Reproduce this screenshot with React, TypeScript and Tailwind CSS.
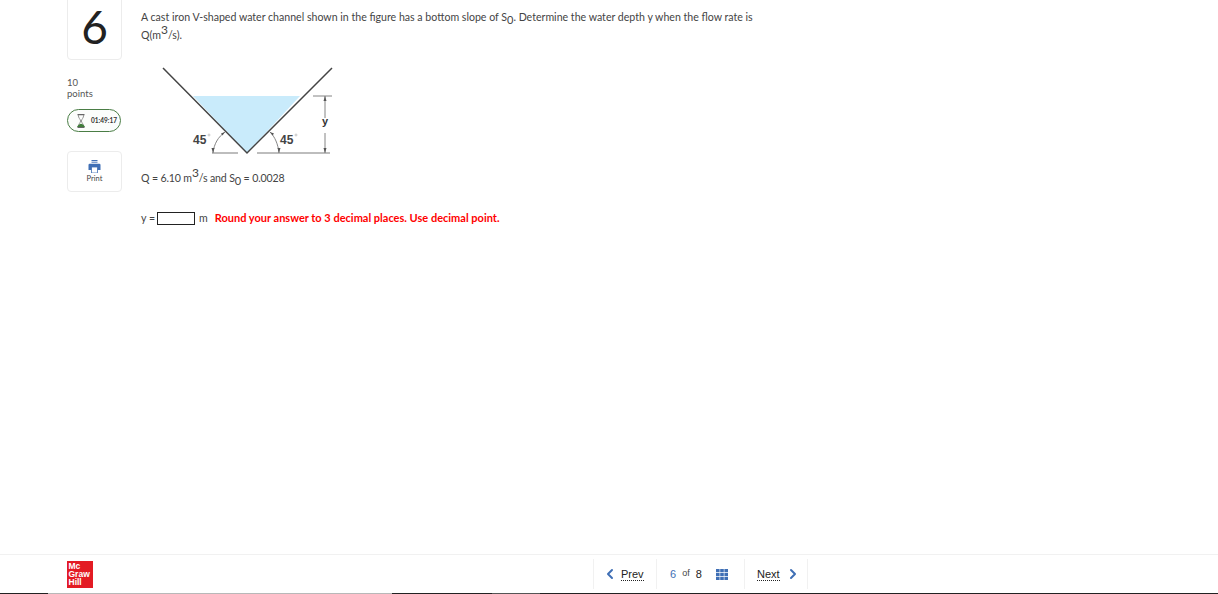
import { ChevronLeft, ChevronRight } from "lucide-react";

// Print glyph from the sidebar button
function PrintIcon() {
  return (
    <svg width="13" height="13" viewBox="0 0 13 13">
      <rect x="3.500" y="0" width="6" height="1.200" fill="#3f6fb5" />
      <rect x="3.500" y="1.800" width="6" height="1.200" fill="#7f9fd0" />
      <path d="M.5 5 a1.200 1.200 0 0 1 1.200-1.200 h9.600 a1.200 1.200 0 0 1 1.200 1.200 v5 h-12z" fill="#3f6fb5" />
      <rect x="3.500" y="7" width="6" height="6" fill="#fff" stroke="#3f6fb5" strokeWidth="0.8" />
    </svg>
  );
}

function HourglassIcon() {
  return (
    <svg width="10" height="14" viewBox="0 0 10 14" fill="none">
      <path d="M1.500 .7h7M1.500 13.300h7" stroke="#666" strokeWidth="1.200" />
      <path d="M2.300 1c0 3.200 2.300 4.300 2.300 6s-2.300 2.800-2.300 6M7.700 1c0 3.200-2.300 4.300-2.300 6s2.300 2.800 2.300 6" stroke="#888" strokeWidth="0.9" />
      <path d="M1 13c.8-2 2.800-3 4-3.300 1.200.3 3.200 1.300 4 3.300z" fill="#3f7d3a" />
    </svg>
  );
}

// Channel figure: V section, water fill, angle arcs and depth dimension
function ChannelFigure() {
  return (
    <svg width="175" height="92" viewBox="0 0 175 92" fill="none">
      <path d="M33 31 H140 L87 88z" fill="#c9ebfb" />
      <path d="M3 3 L87 88 L172 3" stroke="#444" strokeWidth="1.500" />
      <path d="M52 88 H78 M97 88 H170" stroke="#a8a8a8" strokeWidth="1.400" />
      <path d="M153 31 H172 M165 31 V53 M165 68 V88" stroke="#777" strokeWidth="0.900" />
      <path d="M165 31 l-1.500 5 h3z M165 88 l-1.500-5 h3z" fill="#555" />
      <path d="M53 88 C54 79 58 72 65 67" stroke="#777" strokeWidth="0.900" />
      <path d="M110 67 C115 72 118 79 119 88" stroke="#777" strokeWidth="0.900" />
      <path d="M53 88 l-1.500-5 h3z M119 88 l-1.500-5 h3z" fill="#555" />
      <path d="M65 67 l-4 1.500 1.500 2z M110 67 l4 1.500 -1.500 2z" fill="#555" />
      <text x="165" y="60" textAnchor="middle" fontSize="11" fontWeight="700" fill="#333" fontFamily="Liberation Sans, sans-serif">y</text>
      <text x="33" y="79" fontSize="12" fontWeight="700" fill="#444" fontFamily="Liberation Sans, sans-serif">45</text>
      <text x="120" y="79" fontSize="12" fontWeight="700" fill="#444" fontFamily="Liberation Sans, sans-serif">45</text>
      <circle cx="49" cy="70" r="1" stroke="#aaa" strokeWidth="0.600" />
      <circle cx="136" cy="70" r="1" stroke="#aaa" strokeWidth="0.600" />
    </svg>
  );
}

export default function App() {
  return (
    <div className="relative h-[594px] w-[1218px] overflow-hidden bg-white font-['Lato','Liberation_Sans',sans-serif] text-[#444]">
      <div className="flex h-[554px]">
        {/* Left rail */}
        <aside className="ml-[67px] flex w-[74px] shrink-0 flex-col items-start">
          <div className="-mt-[4px] flex h-[64px] w-[55px] items-center justify-center rounded border border-[#ececec] pb-[3px] text-[46px] leading-none text-[#222]">
            6
          </div>
          <div className="mt-[17px] text-[9.500px] leading-[11px] text-[#555]">
            10
            <br />
            points
          </div>
          <div className="mt-[10px] flex h-[23px] w-[54px] items-center gap-[5px] rounded-[12px] border border-[#4a7d45] bg-[#fbfdfb] pl-[8px]">
            <HourglassIcon />
            <span className="text-[6.500px] font-bold text-[#333]">01:49:17</span>
          </div>
          <div className="mt-[19px] flex h-[41px] w-[55px] flex-col items-center justify-center rounded border border-[#ececec]">
            <PrintIcon />
            <span className="mt-[2px] text-[7.500px] leading-[8px] text-[#444]">Print</span>
          </div>
        </aside>

        {/* Question */}
        <main className="flex-1 text-[10.600px]">
          <p className="w-[625px] pt-[8px] leading-[18px]">
            A cast iron V-shaped water channel shown in the figure has a bottom slope of S
            <sub className="text-[11px] leading-none">0</sub>. Determine the water depth y when the flow rate is Q(m
            <sup className="top-[-5px] text-[12px] leading-none">3</sup>/s).
          </p>
          <div className="mt-[21px] ml-[19px]">
            <ChannelFigure />
          </div>
          <p className="mt-[12px] leading-[18px] tracking-[-0.15px]">
            Q = 6.10 m<sup className="top-[-5px] text-[12px] leading-none">3</sup>/s and S
            <sub className="text-[11px] leading-none">0</sub> = 0.0028
          </p>
          <div className="mt-[24px] flex items-center leading-[14px]">
            <span className="mr-[2px]">y =</span>
            <span className="h-[13px] w-[38px] border border-[#222]" />
            <span className="ml-[4px]">m</span>
            <span className="ml-[7px] text-[11px] font-bold text-[#f00]">Round your answer to 3 decimal places. Use decimal point.</span>
          </div>
        </main>
      </div>

      {/* Footer */}
      <footer className="flex h-[38px] items-center border-t border-[#f1f1f1] pl-[67px] pr-[410px]">
        <div className="mt-[1px] flex h-[27px] w-[26px] flex-col justify-center bg-[#e31b23] pl-[1.500px] font-['Liberation_Sans',sans-serif] text-[8.500px] font-bold leading-[8px] text-white">
          <span>Mc</span>
          <span>Graw</span>
          <span>Hill</span>
        </div>
        <nav className="mt-[1px] ml-auto flex h-[30px] items-stretch font-['Liberation_Sans',sans-serif] text-[11px]">
          <div className="flex w-[64px] items-center gap-[3px] border-x border-[#f1f1f1] pl-[8px]">
            <ChevronLeft className="h-[16px] w-[16px] text-[#3f6fb5]" strokeWidth={3} />
            <span className="border-b border-dotted border-[#222] leading-[12px] text-[#222]">Prev</span>
          </div>
          <div className="flex w-[87px] items-center pl-[13px]">
            <span className="text-[#3f6fb5]">6</span>
            <span className="ml-[6px] text-[9px]">of</span>
            <span className="ml-[6px] text-[#222]">8</span>
            <svg className="ml-[14px]" width="12" height="11" viewBox="0 0 12 11" fill="#3f6fb5">
              <path d="M0 0h3.600v3.200H0zM4.200 0h3.600v3.200H4.200zM8.400 0H12v3.200H8.400zM0 3.900h3.600v3.200H0zM4.200 3.900h3.600v3.200H4.200zM8.400 3.900H12v3.200H8.400zM0 7.800h3.600V11H0zM4.200 7.800h3.600V11H4.200zM8.400 7.800H12V11H8.400z" />
            </svg>
          </div>
          <div className="flex w-[64px] items-center gap-[5px] border-x border-[#f1f1f1] pl-[12px]">
            <span className="border-b border-dotted border-[#222] leading-[12px] text-[#222]">Next</span>
            <ChevronRight className="h-[16px] w-[16px] text-[#3f6fb5]" strokeWidth={3} />
          </div>
        </nav>
      </footer>

      {/* Scrollbar strip at the screenshot's bottom edge */}
      <div className="absolute inset-x-0 bottom-0 flex h-[1.500px] bg-[#222]">
        <div className="w-[48px]" />
        <div className="w-[344px] bg-[#b8b8b8]" />
        <div className="w-[100px]" />
        <div className="w-[48px] bg-[#555]" />
      </div>
    </div>
  );
}
